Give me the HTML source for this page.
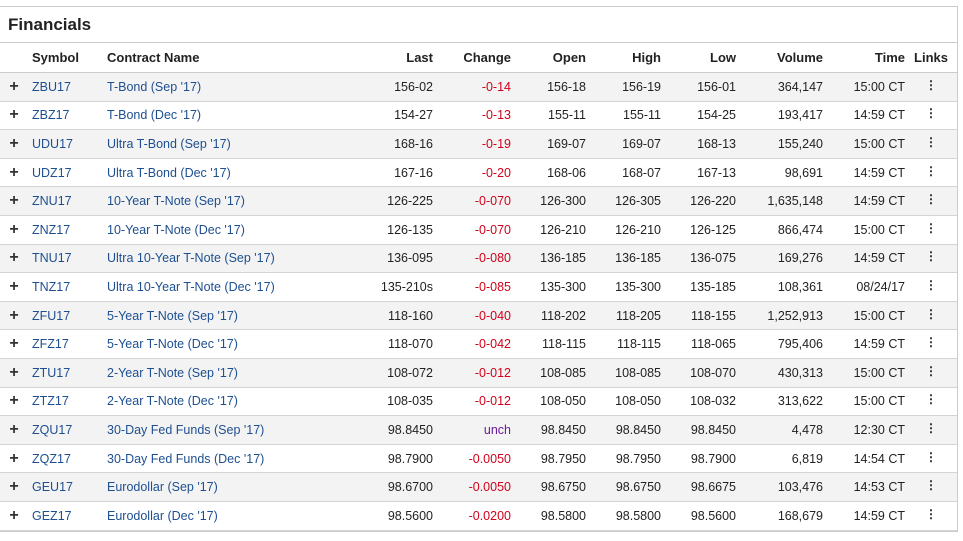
<!DOCTYPE html>
<html><head><style>
body{margin:0;width:963px;height:541px;background:#fff;font-family:"Liberation Sans",Arial,sans-serif;overflow:hidden;position:relative}
.box{position:absolute;left:0;top:6px;width:957px;height:524px;border-top:1px solid #ccc;border-right:1px solid #ccc;border-bottom:1px solid #ccc}
h2{margin:0;position:absolute;left:8px;top:15px;font-size:17px;font-weight:bold;color:#222}
table{position:absolute;left:0;top:42px;width:957px;border-collapse:collapse;font-size:12.5px;color:#222}
th{height:29px;font-weight:bold;text-align:right;padding:0;border-top:1px solid #ccc;border-bottom:1px solid #ccc;font-size:13px}
td{height:27.6px;padding:0;text-align:right;border-bottom:1px solid #d4d4d4;line-height:14px}
tr:nth-child(even) td{background:#f3f3f3}
.l{text-align:left}
.s{color:#1d4f91}
.r{color:#d0021b}
.u{color:#6a1b9a}
.p{font-weight:bold;font-size:16px;text-align:center;color:#333}
.k{text-align:center;font-weight:bold;font-size:12px;line-height:10px;vertical-align:middle}
.k span{position:relative;top:-2px}
</style></head><body>
<div class="box"></div>
<h2>Financials</h2>
<table>
<colgroup><col style="width:28px"><col style="width:79px"><col style="width:200px"><col style="width:126px"><col style="width:78px"><col style="width:75px"><col style="width:75px"><col style="width:75px"><col style="width:87px"><col style="width:82px"><col style="width:52px"></colgroup>
<tr><th></th><th class="l" style="padding-left:4px">Symbol</th><th class="l">Contract Name</th><th>Last</th><th>Change</th><th>Open</th><th>High</th><th>Low</th><th>Volume</th><th>Time</th><th style="text-align:center">Links</th></tr>
<tr><td class="p">+</td><td class="l s" style="padding-left:4px">ZBU17</td><td class="l s">T-Bond (Sep '17)</td><td>156-02</td><td class="r">-0-14</td><td>156-18</td><td>156-19</td><td>156-01</td><td>364,147</td><td>15:00 CT</td><td class="k"><span>⋮</span></td></tr>
<tr><td class="p">+</td><td class="l s" style="padding-left:4px">ZBZ17</td><td class="l s">T-Bond (Dec '17)</td><td>154-27</td><td class="r">-0-13</td><td>155-11</td><td>155-11</td><td>154-25</td><td>193,417</td><td>14:59 CT</td><td class="k"><span>⋮</span></td></tr>
<tr><td class="p">+</td><td class="l s" style="padding-left:4px">UDU17</td><td class="l s">Ultra T-Bond (Sep '17)</td><td>168-16</td><td class="r">-0-19</td><td>169-07</td><td>169-07</td><td>168-13</td><td>155,240</td><td>15:00 CT</td><td class="k"><span>⋮</span></td></tr>
<tr><td class="p">+</td><td class="l s" style="padding-left:4px">UDZ17</td><td class="l s">Ultra T-Bond (Dec '17)</td><td>167-16</td><td class="r">-0-20</td><td>168-06</td><td>168-07</td><td>167-13</td><td>98,691</td><td>14:59 CT</td><td class="k"><span>⋮</span></td></tr>
<tr><td class="p">+</td><td class="l s" style="padding-left:4px">ZNU17</td><td class="l s">10-Year T-Note (Sep '17)</td><td>126-225</td><td class="r">-0-070</td><td>126-300</td><td>126-305</td><td>126-220</td><td>1,635,148</td><td>14:59 CT</td><td class="k"><span>⋮</span></td></tr>
<tr><td class="p">+</td><td class="l s" style="padding-left:4px">ZNZ17</td><td class="l s">10-Year T-Note (Dec '17)</td><td>126-135</td><td class="r">-0-070</td><td>126-210</td><td>126-210</td><td>126-125</td><td>866,474</td><td>15:00 CT</td><td class="k"><span>⋮</span></td></tr>
<tr><td class="p">+</td><td class="l s" style="padding-left:4px">TNU17</td><td class="l s">Ultra 10-Year T-Note (Sep '17)</td><td>136-095</td><td class="r">-0-080</td><td>136-185</td><td>136-185</td><td>136-075</td><td>169,276</td><td>14:59 CT</td><td class="k"><span>⋮</span></td></tr>
<tr><td class="p">+</td><td class="l s" style="padding-left:4px">TNZ17</td><td class="l s">Ultra 10-Year T-Note (Dec '17)</td><td>135-210s</td><td class="r">-0-085</td><td>135-300</td><td>135-300</td><td>135-185</td><td>108,361</td><td>08/24/17</td><td class="k"><span>⋮</span></td></tr>
<tr><td class="p">+</td><td class="l s" style="padding-left:4px">ZFU17</td><td class="l s">5-Year T-Note (Sep '17)</td><td>118-160</td><td class="r">-0-040</td><td>118-202</td><td>118-205</td><td>118-155</td><td>1,252,913</td><td>15:00 CT</td><td class="k"><span>⋮</span></td></tr>
<tr><td class="p">+</td><td class="l s" style="padding-left:4px">ZFZ17</td><td class="l s">5-Year T-Note (Dec '17)</td><td>118-070</td><td class="r">-0-042</td><td>118-115</td><td>118-115</td><td>118-065</td><td>795,406</td><td>14:59 CT</td><td class="k"><span>⋮</span></td></tr>
<tr><td class="p">+</td><td class="l s" style="padding-left:4px">ZTU17</td><td class="l s">2-Year T-Note (Sep '17)</td><td>108-072</td><td class="r">-0-012</td><td>108-085</td><td>108-085</td><td>108-070</td><td>430,313</td><td>15:00 CT</td><td class="k"><span>⋮</span></td></tr>
<tr><td class="p">+</td><td class="l s" style="padding-left:4px">ZTZ17</td><td class="l s">2-Year T-Note (Dec '17)</td><td>108-035</td><td class="r">-0-012</td><td>108-050</td><td>108-050</td><td>108-032</td><td>313,622</td><td>15:00 CT</td><td class="k"><span>⋮</span></td></tr>
<tr><td class="p">+</td><td class="l s" style="padding-left:4px">ZQU17</td><td class="l s">30-Day Fed Funds (Sep '17)</td><td>98.8450</td><td class="u">unch</td><td>98.8450</td><td>98.8450</td><td>98.8450</td><td>4,478</td><td>12:30 CT</td><td class="k"><span>⋮</span></td></tr>
<tr><td class="p">+</td><td class="l s" style="padding-left:4px">ZQZ17</td><td class="l s">30-Day Fed Funds (Dec '17)</td><td>98.7900</td><td class="r">-0.0050</td><td>98.7950</td><td>98.7950</td><td>98.7900</td><td>6,819</td><td>14:54 CT</td><td class="k"><span>⋮</span></td></tr>
<tr><td class="p">+</td><td class="l s" style="padding-left:4px">GEU17</td><td class="l s">Eurodollar (Sep '17)</td><td>98.6700</td><td class="r">-0.0050</td><td>98.6750</td><td>98.6750</td><td>98.6675</td><td>103,476</td><td>14:53 CT</td><td class="k"><span>⋮</span></td></tr>
<tr><td class="p">+</td><td class="l s" style="padding-left:4px">GEZ17</td><td class="l s">Eurodollar (Dec '17)</td><td>98.5600</td><td class="r">-0.0200</td><td>98.5800</td><td>98.5800</td><td>98.5600</td><td>168,679</td><td>14:59 CT</td><td class="k"><span>⋮</span></td></tr>
</table>
</body></html>
